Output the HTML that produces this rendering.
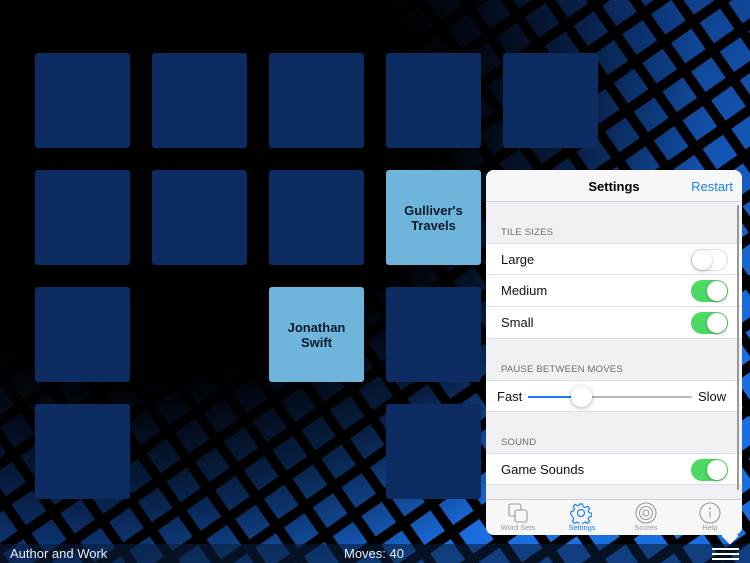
<!DOCTYPE html>
<html><head><meta charset="utf-8"><style>
*{margin:0;padding:0;box-sizing:border-box}
html,body{width:750px;height:563px;overflow:hidden}
body{background:#000;font-family:"Liberation Sans",sans-serif;position:relative}
.bgsvg{position:absolute;left:0;top:0}
.t{position:absolute;width:95px;height:95px;background:#0c2c62;border-radius:3px}
.l{background:#6fb5db;color:#0a1a2a;font-weight:bold;font-size:13px;display:flex;align-items:center;justify-content:center;text-align:center;line-height:15px}
.bar{position:absolute;left:0;top:544px;width:750px;height:19px;background:rgba(10,30,60,.6);color:#e8eef5;font-size:13px;overflow:hidden}
.panel{position:absolute;left:486px;top:170px;width:256px;height:365px;background:#efeff4;border-radius:8px;overflow:hidden}
.hdr{height:32px;background:#f7f7f7;border-bottom:1px solid #d0d0d6;position:relative;font-size:13px}
.sec{position:absolute;left:15px;font-size:9.5px;color:#6d6d72;letter-spacing:.2px}
.row{position:absolute;left:0;width:256px;height:32px;background:#fff;font-size:13px;color:#111;border-bottom:1px solid #e0e0e4}
.row span{position:absolute;left:15px;top:8px}
.sw{position:absolute;right:14px;top:5px;width:37px;height:22px;border-radius:11px;background:#4cd964}
.sw::after{content:"";position:absolute;right:1px;top:1px;width:20px;height:20px;border-radius:50%;background:#fff;box-shadow:0 1px 3px rgba(0,0,0,.3)}
.sw.off{background:#fff;border:1px solid #ddd}
.sw.off::after{left:0;right:auto;top:0}
.tabs{position:absolute;left:0;top:329px;width:256px;height:36px;background:#f7f7f7;border-top:1px solid #d0d0d6;font-size:7.5px;color:#999}
.tab{position:absolute;top:23px;width:64px;text-align:center}
</style></head><body>
<svg class="bgsvg" width="750" height="563" viewBox="0 0 750 563">
<defs>
<linearGradient id="g" x1="0" y1="0" x2="1" y2="1"><stop offset="0.3" stop-color="#0a2a66"/><stop offset="0.8" stop-color="#1a6ee0"/></linearGradient>
<pattern id="p" width="35" height="35" patternUnits="userSpaceOnUse" patternTransform="rotate(-35)"><rect x="0" y="0" width="25" height="25" fill="#fff"/></pattern>
<mask id="m"><rect width="750" height="563" fill="url(#p)"/></mask>
<radialGradient id="s" cx="150" cy="140" r="560" gradientUnits="userSpaceOnUse" gradientTransform="translate(150 140) scale(1 .84) translate(-150 -140)"><stop offset="0.5" stop-color="#000" stop-opacity="1"/><stop offset="0.72" stop-color="#000" stop-opacity=".65"/><stop offset="1" stop-color="#000" stop-opacity="0"/></radialGradient>
</defs>
<rect width="750" height="563" fill="#000"/>
<rect width="750" height="563" fill="url(#g)" mask="url(#m)"/>
<rect width="750" height="563" fill="url(#s)"/>
</svg>
<div class="t" style="left:35px;top:53px"></div><div class="t" style="left:152px;top:53px"></div><div class="t" style="left:269px;top:53px"></div><div class="t" style="left:386px;top:53px"></div><div class="t" style="left:503px;top:53px"></div>
<div class="t" style="left:35px;top:170px"></div><div class="t" style="left:152px;top:170px"></div><div class="t" style="left:269px;top:170px"></div><div class="t l" style="left:386px;top:170px">Gulliver's<br>Travels</div>
<div class="t" style="left:35px;top:287px"></div><div class="t l" style="left:269px;top:287px">Jonathan<br>Swift</div><div class="t" style="left:386px;top:287px"></div>
<div class="t" style="left:35px;top:404px"></div><div class="t" style="left:386px;top:404px"></div>
<div class="bar"><span style="position:absolute;left:10px;top:2px">Author and Work</span><span style="position:absolute;left:344px;top:2px">Moves: 40</span>
<div style="position:absolute;left:712px;top:4px;width:27px;height:2px;background:#fff;box-shadow:0 5px 0 #fff,0 10px 0 #fff"></div></div>
<div style="position:absolute;left:724px;top:530px;width:12px;height:12px;background:#f7f7f7;transform:rotate(45deg)"></div>
<div class="panel">
<div class="hdr"><b style="position:absolute;left:0;width:256px;text-align:center;top:9px;font-weight:bold">Settings</b><span style="position:absolute;right:9px;top:9px;color:#1a82f0">Restart</span></div>
<div class="sec" style="top:57px">TILE SIZES</div>
<div class="row" style="top:73px;border-top:1px solid #e0e0e4"><span>Large</span><div class="sw off"></div></div>
<div class="row" style="top:105px"><span>Medium</span><div class="sw"></div></div>
<div class="row" style="top:137px"><span>Small</span><div class="sw"></div></div>
<div class="sec" style="top:194px">PAUSE BETWEEN MOVES</div>
<div class="row" style="top:210px;border-top:1px solid #e0e0e4"><span style="left:11px">Fast</span><span style="left:212px">Slow</span>
<div style="position:absolute;left:42px;top:15px;width:164px;height:2px;background:#b8b8b8"></div>
<div style="position:absolute;left:42px;top:15px;width:53px;height:2px;background:#1a82f0"></div>
<div style="position:absolute;left:85px;top:5px;width:21px;height:21px;border-radius:50%;background:#fff;box-shadow:0 1px 4px rgba(0,0,0,.35)"></div></div>
<div class="sec" style="top:267px">SOUND</div>
<div class="row" style="top:283px;border-top:1px solid #e0e0e4"><span>Game Sounds</span><div class="sw"></div></div>
<div style="position:absolute;right:3px;top:35px;width:2px;height:285px;background:#999;border-radius:1px"></div>
<div class="tabs">
<svg style="position:absolute;left:21px;top:3px" width="22" height="20" viewBox="0 0 22 20" fill="none" stroke="#999" stroke-width="1.1"><rect x="2" y="1" width="12" height="12" rx="2"/><rect x="8" y="7" width="12" height="12" rx="2" fill="#f7f7f7"/></svg>
<svg style="position:absolute;left:84px;top:2px" width="22" height="22" viewBox="0 0 22 22" fill="none" stroke="#1a82f0" stroke-width="1.2"><path d="M9.5 2h3l.6 2.6 2 1 2.4-1.4 2.1 2.1-1.4 2.4 1 2 2.6.6v3l-2.6.6-1 2 1.4 2.4-2.1 2.1-2.4-1.4-2 1-.6 2.6h-3l-.6-2.6-2-1-2.4 1.4-2.1-2.1 1.4-2.4-1-2L.9 12.5v-3l2.6-.6 1-2-1.4-2.4 2.1-2.1 2.4 1.4 2-1z"/><circle cx="11" cy="11" r="3.5"/></svg>
<svg style="position:absolute;left:149px;top:2px" width="22" height="22" viewBox="0 0 22 22" fill="none" stroke="#999" stroke-width="1.1"><circle cx="11" cy="11" r="10"/><circle cx="11" cy="11" r="6.5"/><circle cx="11" cy="11" r="3"/></svg>
<svg style="position:absolute;left:213px;top:2px" width="22" height="22" viewBox="0 0 22 22" fill="none" stroke="#999" stroke-width="1.1"><circle cx="11" cy="11" r="10"/><path d="M11 9.5v6"/><circle cx="11" cy="6.5" r=".5"/></svg>
<div class="tab" style="left:0">Word Sets</div><div class="tab" style="left:64px;color:#1a82f0">Settings</div><div class="tab" style="left:128px">Scores</div><div class="tab" style="left:192px">Help</div>
</div>
</div>
</body></html>
